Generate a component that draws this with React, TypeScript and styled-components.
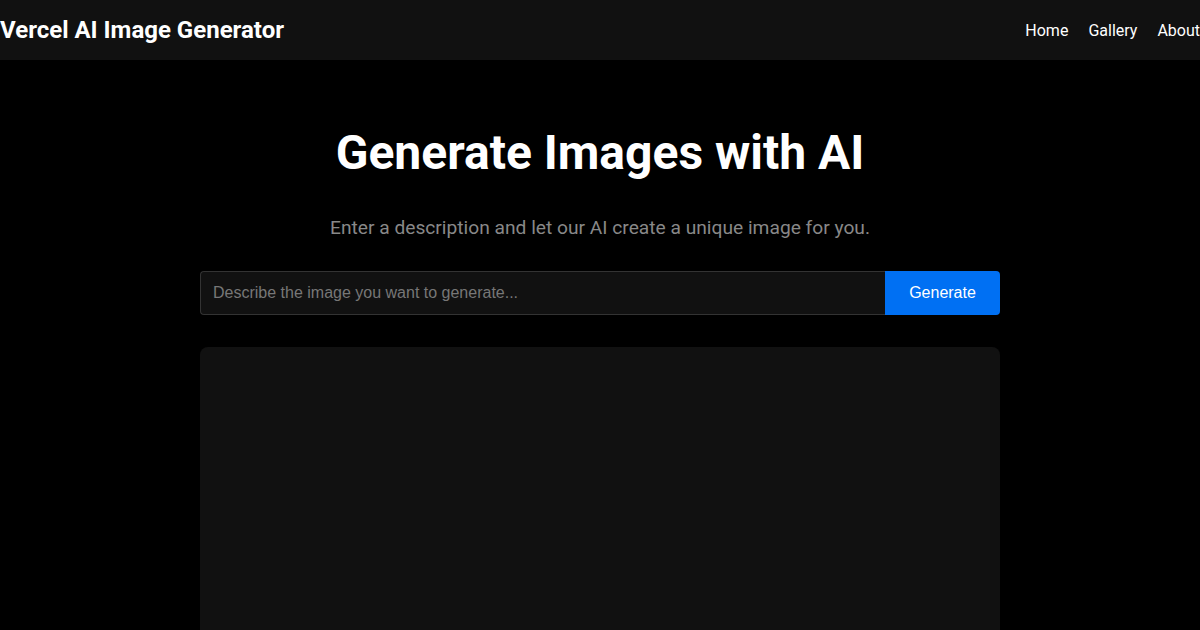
import React from "react";
import styled, {createGlobalStyle} from "styled-components";

const GlobalStyle = createGlobalStyle`
  * {
    box-sizing: border-box;
  }
  html, body {
    margin: 0;
    padding: 0;
    background-color: #000;
    color: #fff;
    font-family: Roboto, "Liberation Sans", sans-serif;
    overflow: hidden;
  }
`

export default function App() {
    return (
        <>
            <GlobalStyle/>
            <Header>
                <Brand>Vercel AI Image Generator</Brand>
                <Nav>
                    <NavLink href="#">Home</NavLink>
                    <NavLink href="#">Gallery</NavLink>
                    <NavLink href="#">About</NavLink>
                </Nav>
            </Header>
            <Main>
                <Title>Generate Images with AI</Title>
                <Subtitle>Enter a description and let our AI create a unique image for you.</Subtitle>
                <Form onSubmit={e => e.preventDefault()}>
                    <PromptInput placeholder="Describe the image you want to generate..."/>
                    <GenerateButton type="submit">Generate</GenerateButton>
                </Form>
                <Preview/>
            </Main>
        </>
    )
}

const Header = styled.header`
  display: flex;
  height: 60px;
  align-items: center;
  justify-content: space-between;
  background-color: #111;
`
const Brand = styled.h1`
  margin: 0;
  font-size: 24px;
  font-weight: 700;
  color: #fff;
`
const Nav = styled.nav`
  display: flex;
  gap: 20px;
  align-items: center;
`
const NavLink = styled.a`
  font-size: 16px;
  color: #fff;
  text-decoration: none;
`
const Main = styled.main`
  display: flex;
  flex-direction: column;
  align-items: center;
  max-width: 800px;
  margin: 0 auto;
  padding-top: 64px;
  text-align: center;
`
const Title = styled.h2`
  margin: 0;
  font-size: 48px;
  line-height: 58px;
  font-weight: 700;
  color: #fff;
`
const Subtitle = styled.p`
  margin: 34px 0 0;
  font-size: 19.2px;
  line-height: 23px;
  color: #888;
`
const Form = styled.form`
  display: flex;
  width: 100%;
  margin-top: 32px;
`
const PromptInput = styled.input`
  flex: 1;
  height: 44px;
  padding: 0 12px;
  font-family: "Liberation Sans", Arial, sans-serif;
  font-size: 16px;
  color: #fff;
  background-color: #111;
  border: 1px solid #333;
  border-right: none;
  border-radius: 4px 0 0 4px;
  outline: none;
  &::placeholder {
    color: #777;
  }
`
const GenerateButton = styled.button`
  width: 115px;
  height: 44px;
  font-family: "Liberation Sans", Arial, sans-serif;
  font-size: 16px;
  color: #fff;
  background-color: #0070f3;
  border: none;
  border-radius: 0 4px 4px 0;
  cursor: pointer;
`
const Preview = styled.div`
  width: 100%;
  height: 400px;
  margin-top: 32px;
  background-color: #111;
  border-radius: 8px;
`
